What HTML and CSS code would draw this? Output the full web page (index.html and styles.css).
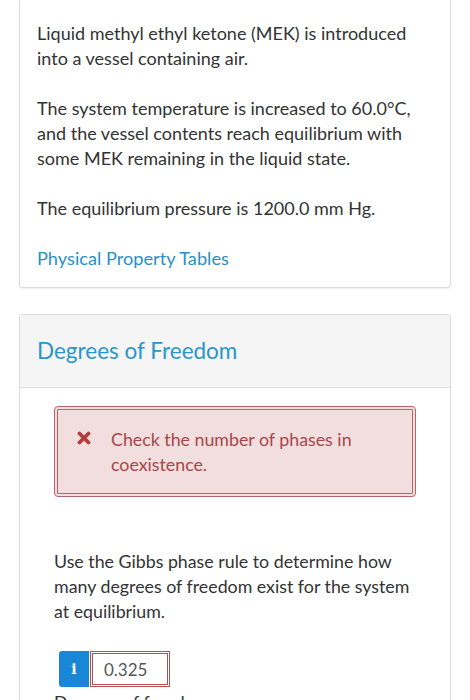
FILE: index.html
```html
<!DOCTYPE html>
<html>
<head>
<meta charset="utf-8">
<link rel="stylesheet" href="styles.css">
</head>
<body>
<div class="page">
  <div class="card card-intro">
    <p>Liquid methyl ethyl ketone (MEK) is introduced into a vessel containing air.</p>
    <p>The system temperature is increased to 60.0°C, and the vessel contents reach equilibrium with some MEK remaining in the liquid state.</p>
    <p>The equilibrium pressure is 1200.0 mm Hg.</p>
    <p><a class="link" href="#">Physical Property Tables</a></p>
  </div>

  <div class="card card-part">
    <div class="card-header">
      <h2 class="title">Degrees of Freedom</h2>
    </div>
    <div class="card-body">
      <div class="alert">
        <svg class="alert-icon" viewBox="0 0 14 14" width="14" height="14" aria-hidden="true">
          <path d="M2.5 2.5 L11.5 11.5 M11.5 2.5 L2.5 11.5" fill="none" stroke="#b03f3c" stroke-width="3.8" stroke-linecap="round"/>
        </svg>
        <div class="alert-text">Check the number of phases in coexistence.</div>
      </div>
      <p class="question">Use the Gibbs phase rule to determine how many degrees of freedom exist for the system at equilibrium.</p>
      <div class="input-group">
        <span class="info-btn">i</span>
        <span class="answer">0.325</span>
      </div>
      <p class="unit">Degrees of freedom</p>
    </div>
  </div>
</div>
</body>
</html>
```

FILE: styles.css
```css
html, body {
  margin: 0;
  padding: 0;
  background: #ffffff;
}

body {
  font-family: Lato, "Open Sans", "Liberation Sans", sans-serif;
  font-size: 18px;
  line-height: 25px;
  color: #333333;
  overflow: hidden;
  height: 700px;
}

.page {
  display: flex;
  flex-direction: column;
  gap: 26px;
  padding: 0 19px 0 19px;
}

.card {
  background: #ffffff;
  border: 1px solid #dcdcdc;
  border-radius: 4px;
  box-shadow: 0 1px 2px rgba(0, 0, 0, 0.06);
}

.card-intro {
  border-top: none;
  border-top-left-radius: 0;
  border-top-right-radius: 0;
  padding: 21px 18px 16px 17px;
}

.card-intro p {
  margin: 0 0 25px 0;
}

.card-intro p:last-child {
  margin-bottom: 0;
}

.link {
  color: #2b8fc6;
  text-decoration: none;
  font-size: 18.2px;
}

.card-part {
  border-bottom: none;
}

.card-header {
  background: #f5f5f5;
  border-bottom: 1px solid #e0e0e0;
  padding: 21px 17px 21px 17px;
  border-top-left-radius: 4px;
  border-top-right-radius: 4px;
}

.title {
  margin: 0;
  font-size: 22.5px;
  line-height: 30px;
  font-weight: 400;
  color: #2b95c9;
}

.card-body {
  padding: 18px 34px 0 34px;
  font-size: 17.8px;
}

.alert {
  display: flex;
  align-items: flex-start;
  background: #f2dede;
  border: 4px double #b6646a;
  border-radius: 4px;
  padding: 17px 16px 16px 19px;
  color: #a5474a;
}

.alert-icon {
  flex: none;
  width: 14px;
  height: 14px;
  margin-top: 4px;
  margin-right: 20px;
}

.alert-text {
  flex: 1;
}

.question {
  margin: 52px 0 0 0;
}

.input-group {
  display: flex;
  margin: 27px 0 0 5px;
  height: 36px;
}

.info-btn {
  width: 30px;
  height: 36px;
  background: #1a86d6;
  color: #ffffff;
  font-family: "DejaVu Serif", "Liberation Serif", serif;
  font-weight: 700;
  font-size: 14px;
  display: flex;
  align-items: center;
  justify-content: center;
  border-radius: 3px 0 0 3px;
}

.answer {
  width: 63px;
  height: 30px;
  border: 3px double #b84f52;
  margin-left: 1px;
  padding-left: 11px;
  display: flex;
  align-items: center;
  color: #555555;
  font-size: 17px;
  background: #ffffff;
}

.unit {
  margin: 3px 0 0 0;
}
```
